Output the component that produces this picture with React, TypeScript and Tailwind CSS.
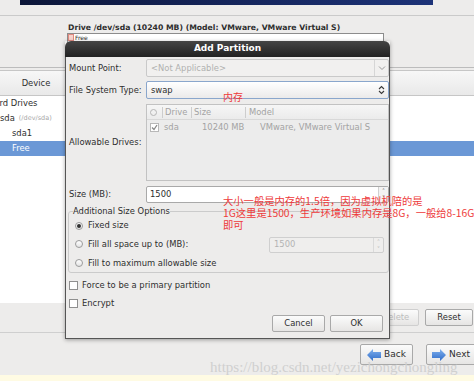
const ui = "font-['DejaVu_Sans',sans-serif]";

const ChevronDown = () => (
  <svg width="8" height="6" viewBox="0 0 8 6">
    <path d="M1 1.5 L4 4.5 L7 1.5" fill="none" stroke="#9a9a9a" strokeWidth="1" />
  </svg>
);

const UpDown = () => (
  <svg width="7" height="10" viewBox="0 0 7 10">
    <path d="M1 4 L3.5 1.5 L6 4" fill="none" stroke="#3a3a3a" strokeWidth="1.1" />
    <path d="M1 6 L3.5 8.5 L6 6" fill="none" stroke="#3a3a3a" strokeWidth="1.1" />
  </svg>
);

const Arrow = ({ dir }: { dir: "left" | "right" }) => (
  <svg width="14" height="12" viewBox="0 0 14 12">
    <defs>
      <linearGradient id={"g" + dir} x1="0" y1="0" x2="0" y2="1">
        <stop offset="0" stopColor="#7fb0ee" />
        <stop offset="1" stopColor="#2f6cc8" />
      </linearGradient>
    </defs>
    {dir === "left" ? (
      <polygon points="0,6 6,0 6,3 14,3 14,9 6,9 6,12" fill={"url(#g" + dir + ")"} />
    ) : (
      <polygon points="14,6 8,0 8,3 0,3 0,9 8,9 8,12" fill={"url(#g" + dir + ")"} />
    )}
  </svg>
);

const Radio = ({ on }: { on?: boolean }) => (
  <span className="flex h-[8px] w-[8px] items-center justify-center rounded-full border border-[#9b9b9b] bg-gradient-to-b from-[#ffffff] to-[#e4e4e4]">
    {on && <span className="h-[4px] w-[4px] rounded-full bg-[#303030]" />}
  </span>
);

const Check = ({ on, dim }: { on?: boolean; dim?: boolean }) => (
  <span
    className={
      "flex h-[9px] w-[9px] items-center justify-center border bg-white " +
      (dim ? "border-[#b8b8b8]" : "border-[#8f8f8f]")
    }
  >
    {on && (
      <svg width="7" height="7" viewBox="0 0 7 7">
        <path d="M1 3.5 L3 5.5 L6 1" fill="none" stroke="#8a8a8a" strokeWidth="1.3" />
      </svg>
    )}
  </span>
);

const Btn = ({ children, w, dim }: { children: React.ReactNode; w: string; dim?: boolean }) => (
  <div
    className={
      "flex h-full items-center justify-center gap-[3px] rounded-[2px] border bg-gradient-to-b from-[#fbfbfb] to-[#e6e5e4] " +
      w +
      (dim ? " border-[#cfcfcf] text-[#bdbdbd]" : " border-[#a9a9a9] text-[#2e2e2e]")
    }
  >
    {children}
  </div>
);

function AddPartition() {
  return (
    <div className={"absolute left-[65px] top-[41px] w-[325px] text-[8.4px] text-[#2e2e2e] shadow-[0_1px_4px_rgba(0,0,0,0.35)] " + ui}>
      <div className="flex h-[16px] items-center justify-center rounded-t-[6px] bg-gradient-to-b from-[#454545] to-[#222222] text-[9px] font-bold text-white">
        Add Partition
      </div>
      <div className="flex h-[282px] flex-col border border-t-0 border-[#555] bg-[#edeceb] pt-[2px]">
        <div className="flex h-[18px] items-center">
          <span className="w-[80px] pl-[3px]">Mount Point:</span>
          <div className="flex h-full w-[243px] items-center justify-between rounded-[2px] border border-[#c9c9c9] bg-[#f1f0ef] pl-[4px] text-[#b0b0b0]">
            <span>&lt;Not Applicable&gt;</span>
            <div className="flex h-full w-[14px] items-center justify-center border-l border-[#d6d6d6]">
              <ChevronDown />
            </div>
          </div>
        </div>
        <div className="mt-[4px] flex h-[18px] items-center">
          <span className="w-[80px] pl-[3px]">File System Type:</span>
          <div className="flex h-full w-[243px] items-center justify-between rounded-[2px] border border-[#8aa6cc] bg-gradient-to-b from-[#ffffff] to-[#ebeaea] pl-[4px]">
            <span>swap</span>
            <div className="flex h-full w-[14px] items-center justify-center">
              <UpDown />
            </div>
          </div>
        </div>
        <div className="mt-[5px] flex h-[77px] items-center">
          <span className="w-[80px] pl-[3px]">Allowable Drives:</span>
          <div className="h-full w-[243px] border border-[#c2c2c2] bg-[#ececec] text-[#a3a3a3]">
            <div className="flex h-[15px] items-center border-b border-[#d8d8d8] bg-gradient-to-b from-[#f6f6f6] to-[#ebebeb]">
              <span className="w-[15px] pl-[3px]">
                <span className="block h-[7px] w-[7px] rounded-full border border-[#b5b5b5]" />
              </span>
              <span className="flex h-[11px] w-[29px] items-center border-l border-[#cdcdcd] pl-[2px]">Drive</span>
              <span className="flex h-[11px] w-[54px] items-center border-l border-[#cdcdcd] pl-[2px]">Size</span>
              <span className="flex h-[11px] items-center border-l border-[#cdcdcd] pl-[3px]">Model</span>
            </div>
            <div className="flex h-[15px] items-center">
              <span className="w-[17px] pl-[3px]">
                <Check on dim />
              </span>
              <span className="w-[38px]">sda</span>
              <span className="w-[58px]">10240 MB</span>
              <span>VMware, VMware Virtual S</span>
            </div>
          </div>
        </div>
        <div className="mt-[5px] flex h-[17px] items-center">
          <span className="w-[80px] pl-[3px]">Size (MB):</span>
          <div className="flex h-full w-[243px] items-center justify-between rounded-[2px] border border-[#a9a9a9] bg-white pl-[3px]">
            <span>1500</span>
            <div className="flex h-full w-[10px] flex-col border-l border-[#d0d0d0] bg-[#f3f3f3] text-[6px] leading-[7px] text-[#555]">
              <span className="text-center">˄</span>
              <span className="text-center">˅</span>
            </div>
          </div>
        </div>
        <fieldset className="ml-[2px] mt-[4px] w-[321px] rounded-[3px] border border-[#cbcbcb]">
          <legend className="ml-[4px] px-0 leading-[8px]">Additional Size Options</legend>
          <div className="pt-[1px]">
            <div className="flex h-[19px] items-center gap-[5px] pl-[6px]">
              <Radio on />
              <span>Fixed size</span>
            </div>
            <div className="flex h-[19px] items-center pl-[6px]">
              <div className="flex flex-1 items-center gap-[5px]">
                <Radio />
                <span>Fill all space up to (MB):</span>
              </div>
              <div className="mr-[4px] flex h-[16px] w-[115px] items-center justify-between rounded-[2px] border border-[#cfcfcf] bg-[#efeeed] pl-[4px] text-[#b3b3b3]">
                <span>1500</span>
                <div className="flex h-full w-[10px] flex-col border-l border-[#dadada] text-[6px] leading-[7px]">
                  <span className="text-center">˄</span>
                  <span className="text-center">˅</span>
                </div>
              </div>
            </div>
            <div className="flex h-[18px] items-center gap-[5px] pl-[6px]">
              <Radio />
              <span>Fill to maximum allowable size</span>
            </div>
          </div>
        </fieldset>
        <div className="mt-[3px] flex h-[18px] items-center gap-[4px] pl-[3px]">
          <Check />
          <span>Force to be a primary partition</span>
        </div>
        <div className="flex h-[18px] items-center gap-[4px] pl-[3px]">
          <Check />
          <span>Encrypt</span>
        </div>
        <div className="mt-[3px] flex h-[17px] justify-end gap-[5px] pr-[6px]">
          <Btn w="w-[53px]">Cancel</Btn>
          <Btn w="w-[53px]">OK</Btn>
        </div>
      </div>
    </div>
  );
}

export default function App() {
  return (
    <div className={"relative h-[381px] w-[474px] overflow-hidden bg-[#edeceb] text-[8.4px] text-[#2e2e2e] " + ui}>
      <div className="h-[16px] border-b border-[#cacaca]">
        <div className="ml-[20px] h-[5px] w-[413px] bg-gradient-to-r from-[#0c1638] via-[#14245a] to-[#1d3378]" />
      </div>
      <div className="h-[51px] pl-[67px] pt-[7px]">
        <div className="pl-[1px] text-[7.7px] font-bold leading-[10px]">Drive /dev/sda (10240 MB) (Model: VMware, VMware Virtual S)</div>
        <div className="flex h-[28px] w-[317px] items-start border border-[#8c8c8c] bg-white">
          <span className="h-[7px] w-[6px] border border-[#e08a80] bg-[#f7d3cc]" />
          <span className="ml-[1px] text-[6px] leading-[7px]">Free</span>
        </div>
      </div>
      <div className="h-[3px] border-t border-[#bcbcbc]" />
      <div className="flex h-[26px] items-center border-y border-[#c6c6c6] bg-gradient-to-b from-[#f7f7f7] to-[#e9e9e9]">
        <span className="w-[72px] text-center">Device</span>
      </div>
      <div className="h-[207px] bg-white">
        <div className="ml-[-12px] flex h-[15px] items-center whitespace-nowrap">Hard Drives</div>
        <div className="flex h-[15px] items-center gap-[4px]">
          <span>sda</span>
          <span className="text-[6.5px] text-[#a8a8a8]">(/dev/sda)</span>
        </div>
        <div className="flex h-[15px] items-center pl-[12px]">sda1</div>
        <div className="flex h-[15px] items-center bg-[#6b98d6] pl-[12px] text-white">Free</div>
      </div>
      <div className="flex h-[30px] items-start justify-end gap-[6px] border-b border-[#cfcfcf] pr-[1px] pt-[6px]">
        <div className="h-[17px]">
          <Btn w="w-[47px]" dim>
            Delete
          </Btn>
        </div>
        <div className="h-[17px]">
          <Btn w="w-[48px]">Reset</Btn>
        </div>
      </div>
      <div className="flex h-[42px] items-start justify-end gap-[13px] pt-[11px]">
        <div className="h-[21px]">
          <Btn w="w-[53px]">
            <Arrow dir="left" />
            <span className="text-[9px]">Back</span>
          </Btn>
        </div>
        <div className="mr-[-2px] h-[21px]">
          <Btn w="w-[50px]">
            <Arrow dir="right" />
            <span className="text-[9px]">Next</span>
          </Btn>
        </div>
      </div>
      <div className="h-[6px] bg-[#fffbe3]" />

      <AddPartition />

      <div className="absolute left-[223px] top-[91px] font-['Noto_Sans_CJK_SC',sans-serif] text-[10px] leading-[12px] text-[#ee3a3a]">内存</div>
      <div className="absolute left-[223px] top-[195px] whitespace-nowrap font-['Noto_Sans_CJK_SC',sans-serif] text-[10.3px] leading-[12px] text-[#ee3a3a]">
        <div>大小一般是内存的1.5倍，因为虚拟机陪的是</div>
        <div>1G这里是1500，生产环境如果内存是8G，一般给8-16G</div>
        <div>即可</div>
      </div>
      <div className="absolute left-[210px] top-[359px] whitespace-nowrap font-['Liberation_Serif',serif] text-[15px] leading-[16px] text-[#d0d0d0]">
        https://blog.csdn.net/yezichongchongling
      </div>
    </div>
  );
}
